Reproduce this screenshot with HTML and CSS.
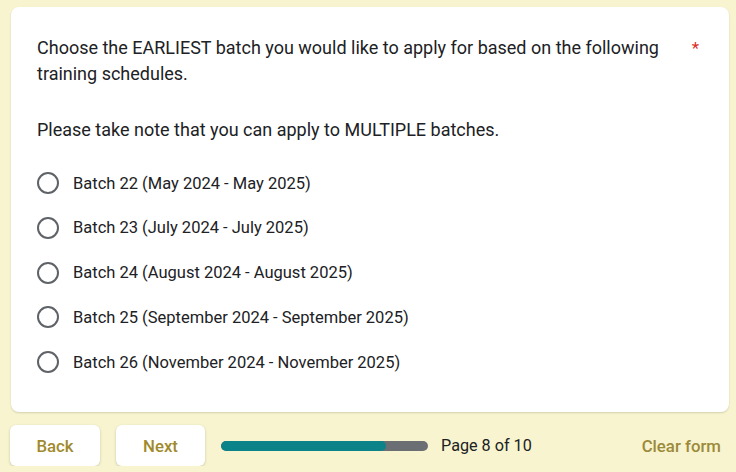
FILE: index.html
```html
<!DOCTYPE html>
<html>
<head>
<meta charset="utf-8">
<link rel="stylesheet" href="styles.css">
</head>
<body>
<div class="page">
  <div class="card">
    <div class="question">
      <div class="qtext">
        <p>Choose the EARLIEST batch you would like to apply for based on the following training schedules.</p>
        <p>Please take note that you can apply to MULTIPLE batches.</p>
      </div>
      <span class="req">*</span>
    </div>
    <div class="options">
      <label class="opt"><span class="radio"></span><span>Batch 22 (May 2024 - May 2025)</span></label>
      <label class="opt"><span class="radio"></span><span>Batch 23 (July 2024 - July 2025)</span></label>
      <label class="opt"><span class="radio"></span><span>Batch 24 (August 2024 - August 2025)</span></label>
      <label class="opt"><span class="radio"></span><span>Batch 25 (September 2024 - September 2025)</span></label>
      <label class="opt"><span class="radio"></span><span>Batch 26 (November 2024 - November 2025)</span></label>
    </div>
  </div>
  <div class="footer">
    <button class="btn">Back</button>
    <button class="btn">Next</button>
    <div class="progress"><div class="fill"></div></div>
    <span class="pagenum">Page 8 of 10</span>
    <span class="clear">Clear form</span>
  </div>
</div>
</body>
</html>
```
FILE: styles.css
```css
html, body {
  margin: 0;
  padding: 0;
  background: #f7f4cf;
  font-family: Roboto, "Liberation Sans", sans-serif;
}
.page {
  padding: 7px 7px 0 11px;
}
.card {
  background: #fff;
  border-radius: 8px;
  box-shadow: 0 1px 2px rgba(0,0,0,0.15);
  padding: 28px 28px 38px 26px;
  width: 664px;
}
.question {
  display: flex;
  justify-content: space-between;
  color: #202124;
  font-size: 18px;
  line-height: 26px;
}
.qtext { width: 640px; }
.qtext p { margin: 0 0 30px 0; }
.qtext p:last-child { margin-bottom: 30px; }
.req {
  color: #d93025;
  font-size: 17px;
  padding-right: 2px;
}
.options {
  margin-top: -2px;
  display: flex;
  flex-direction: column;
  gap: 20.75px;
}
.opt {
  display: flex;
  align-items: center;
  gap: 14px;
  font-size: 16.5px;
  color: #202124;
  height: 24px;
}
.radio {
  width: 18px;
  height: 18px;
  border: 2px solid #5f6368;
  border-radius: 50%;
  box-sizing: content-box;
  flex: none;
}
.footer {
  display: flex;
  align-items: center;
  padding: 13px 0 0 0;
  margin-left: -1px;
}
.btn {
  width: 90px;
  height: 41px;
  border: none;
  border-radius: 6px;
  background: #fff;
  box-shadow: 0 1px 3px rgba(0,0,0,0.18);
  color: #a08a2c;
  font-family: Roboto, "Liberation Sans", sans-serif;
  font-size: 16.8px;
  font-weight: 500;
  margin-right: 16px;
}
.btn + .btn { width: 89px; }
.progress {
  width: 207px;
  height: 10px;
  border-radius: 5px;
  background: #6b6e73;
  margin-right: 13px;
  overflow: hidden;
}
.fill {
  width: 165px;
  height: 100%;
  background: #0b8389;
  border-radius: 5px;
}
.pagenum {
  font-size: 16.2px;
  color: #202124;
}
.clear {
  margin-left: auto;
  margin-right: 8px;
  font-size: 16.8px;
  font-weight: 500;
  color: #9c8a3a;
}
```
